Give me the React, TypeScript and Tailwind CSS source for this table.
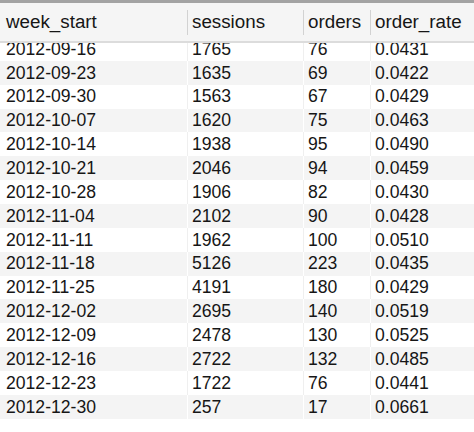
const rows: [string, string, string, string][] = [
  ["2012-09-16", "1765", "76", "0.0431"],
  ["2012-09-23", "1635", "69", "0.0422"],
  ["2012-09-30", "1563", "67", "0.0429"],
  ["2012-10-07", "1620", "75", "0.0463"],
  ["2012-10-14", "1938", "95", "0.0490"],
  ["2012-10-21", "2046", "94", "0.0459"],
  ["2012-10-28", "1906", "82", "0.0430"],
  ["2012-11-04", "2102", "90", "0.0428"],
  ["2012-11-11", "1962", "100", "0.0510"],
  ["2012-11-18", "5126", "223", "0.0435"],
  ["2012-11-25", "4191", "180", "0.0429"],
  ["2012-12-02", "2695", "140", "0.0519"],
  ["2012-12-09", "2478", "130", "0.0525"],
  ["2012-12-16", "2722", "132", "0.0485"],
  ["2012-12-23", "1722", "76", "0.0441"],
  ["2012-12-30", "257", "17", "0.0661"],
];

export default function App() {
  return (
    <div
      className="w-[474px] h-[432px] overflow-hidden bg-white text-[#161616]"
      style={{ fontFamily: '"Liberation Sans", Arial, sans-serif' }}
    >
      <div className="h-[3px] bg-[#a3a3a3]" />
      <div className="h-[40px] bg-[#f5f5f5] border-b-2 border-[#dcdcdc] flex items-center text-[18.8px]">
        <div className="w-[187px] pl-[6px]">week_start</div>
        <div className="w-[116px] pl-[4px] border-l border-[#d2d2d2] h-[25px] flex items-center">sessions</div>
        <div className="w-[67px] pl-[4px] border-l border-[#d2d2d2] h-[25px] flex items-center">orders</div>
        <div className="flex-1 pl-[4px] border-l border-[#d2d2d2] h-[25px] flex items-center">order_rate</div>
      </div>
      <div className="h-[387px] overflow-hidden">
        <div className="-mt-[6px] text-[17.6px]">
          {rows.map((r, i) => {
            const gray = i % 2 === 1;
            const sep = gray ? "border-white" : "border-[#efefef]";
            return (
              <div
                key={r[0]}
                className={`h-[23.87px] flex items-center ${gray ? "bg-[#f4f4f4]" : "bg-white"}`}
              >
                <div className="w-[187px] pl-[6px] h-full flex items-center">{r[0]}</div>
                <div className={`w-[116px] pl-[4px] h-full flex items-center border-l ${sep}`}>{r[1]}</div>
                <div className={`w-[67px] pl-[4px] h-full flex items-center border-l ${sep}`}>{r[2]}</div>
                <div className={`flex-1 pl-[4px] h-full flex items-center border-l ${sep}`}>{r[3]}</div>
              </div>
            );
          })}
        </div>
      </div>
    </div>
  );
}
